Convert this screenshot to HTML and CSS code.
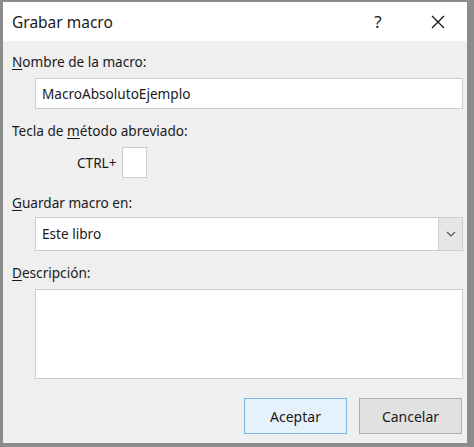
FILE: index.html
```html
<!DOCTYPE html>
<html lang="es">
<head>
    <meta charset="UTF-8">
    <title>Grabar macro</title>
    <link rel="stylesheet" href="styles.css">
</head>
<body>
    <div class="dialog">
        <div class="titlebar">
            <span class="title">Grabar macro</span>
            <span class="help">?</span>
            <span class="close">
                <svg width="14" height="14" viewBox="0 0 14 14">
                    <path d="M1 1L13 13M13 1L1 13" stroke="#111" stroke-width="1.2" fill="none"/>
                </svg>
            </span>
        </div>
        <div class="content">
            <label class="lbl"><u>N</u>ombre de la macro:</label>
            <div class="field text-field">MacroAbsolutoEjemplo</div>

            <label class="lbl lbl-gap">Tecla de <u>m</u>étodo abreviado:</label>
            <div class="shortcut">
                <span>CTRL+</span>
                <div class="keybox"></div>
            </div>

            <label class="lbl lbl-gap lbl-store"><u>G</u>uardar macro en:</label>
            <div class="field select-field">
                <span class="select-value">Este libro</span>
                <span class="select-btn">
                    <svg width="10" height="6" viewBox="0 0 10 6">
                        <path d="M1 1L5 5L9 1" stroke="#555" stroke-width="1.1" fill="none"/>
                    </svg>
                </span>
            </div>

            <label class="lbl lbl-gap"><u>D</u>escripción:</label>
            <div class="field memo"></div>

            <div class="buttons">
                <button class="btn btn-default">Aceptar</button>
                <button class="btn">Cancelar</button>
            </div>
        </div>
    </div>
</body>
</html>
```

FILE: styles.css
```css
* {
    margin: 0;
    padding: 0;
    box-sizing: border-box;
}
body {
    background: #8c8c8c;
    font-family: "Noto Sans", "Open Sans", sans-serif;
    color: #1a1a1a;
    width: 474px;
    height: 447px;
    overflow: hidden;
}
.dialog {
    margin: 2px 0 0 3px;
    width: 464px;
    height: 441px;
    background: #efefef;
}
.titlebar {
    height: 39px;
    background: #fff;
    display: flex;
    align-items: center;
    padding-left: 9px;
}
.title {
    font-size: 15.5px;
    flex: 1;
}
.help {
    font-size: 17px;
    width: 56px;
    text-align: center;
    margin-right: 9px;
}
.close {
    width: 46px;
    display: flex;
    justify-content: center;
    margin-right: 6px;
}
.content {
    padding: 12px 4px 0 9px;
    display: flex;
    flex-direction: column;
    font-size: 13.6px;
}
.lbl {
    display: block;
    line-height: 18px;
}
.lbl u {
    text-decoration-thickness: 1px;
    text-underline-offset: 2px;
}
.lbl-gap {
    margin-top: 13px;
}
.lbl-store {
    margin-top: 16px;
}
.field {
    background: #fff;
    border: 1px solid #cdcdcd;
    margin-left: 23px;
    width: 428px;
}
.text-field {
    height: 31px;
    margin-top: 7px;
    padding-left: 6px;
    line-height: 29px;
}
.shortcut {
    display: flex;
    align-items: center;
    margin-top: 7px;
    padding-left: 65px;
    gap: 5px;
}
.keybox {
    width: 25px;
    height: 31px;
    background: #fff;
    border: 1px solid #cdcdcd;
}
.select-field {
    height: 34px;
    margin-top: 5px;
    display: flex;
}
.select-value {
    flex: 1;
    padding-left: 6px;
    line-height: 32px;
}
.select-btn {
    width: 24px;
    background: #e6e6e6;
    border-left: 1px solid #d4d4d4;
    display: flex;
    align-items: center;
    justify-content: center;
}
.memo {
    height: 90px;
    margin-top: 7px;
}
.buttons {
    display: flex;
    justify-content: flex-end;
    gap: 12px;
    margin-top: 19px;
    padding-right: 1px;
}
.btn {
    width: 103px;
    height: 36px;
    font-family: inherit;
    font-size: 14px;
    color: #1a1a1a;
    background: #e1e1e1;
    border: 1px solid #adadad;
}
.btn-default {
    background: #e5f1fb;
    border-color: #7eb4ea;
}
```
